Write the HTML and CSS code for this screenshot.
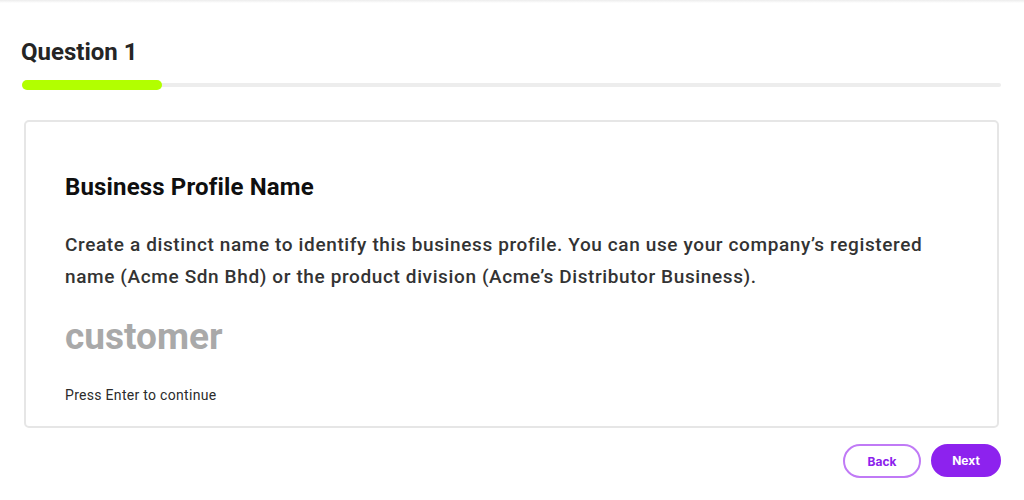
FILE: index.html
```html
<!DOCTYPE html>
<html lang="en">
<head>
<meta charset="utf-8">
<title>Question 1</title>
<link rel="stylesheet" href="styles.css">
</head>
<body>
<div class="topbar"></div>
<main class="page">
  <h1 class="q-title">Question 1</h1>
  <div class="progress"><div class="progress-fill"></div></div>
  <section class="card">
    <h2 class="card-title">Business Profile Name</h2>
    <p class="card-desc">Create a distinct name to identify this business profile. You can use your company’s registered name (Acme Sdn Bhd) or the product division (Acme’s Distributor Business).</p>
    <input class="answer" type="text" value="customer">
    <p class="hint">Press Enter to continue</p>
  </section>
  <div class="actions">
    <button class="btn btn-outline">Back</button>
    <button class="btn btn-primary">Next</button>
  </div>
</main>
</body>
</html>
```

FILE: styles.css
```css
* { box-sizing: border-box; }
html, body { margin: 0; padding: 0; background: #fff; }
body { font-family: Roboto, "Noto Sans", sans-serif; color: #222; }

.topbar {
  height: 3px;
  background: linear-gradient(#ececec, #fff);
}

.page {
  padding: 0 23px 0 22px;
}

.q-title {
  margin: 34px 0 0 -1px;
  font-size: 24px;
  line-height: 30px;
  font-weight: 700;
  color: #252525;
}

.progress {
  margin-top: 16px;
  height: 4px;
  background: #ededed;
  border-radius: 2px;
  position: relative;
}
.progress-fill {
  position: absolute;
  left: 0;
  top: -3px;
  width: 140px;
  height: 10px;
  background: #b2ff00;
  border-radius: 5px;
}

.card {
  margin: 33px 2px 0 2px;
  border: 2px solid #e6e6e6;
  border-radius: 5px;
  padding: 50px 40px 22px 39px;
}

.card-title {
  margin: 0;
  font-size: 24px;
  line-height: 30px;
  font-weight: 700;
  letter-spacing: 0.15px;
  color: #0f0f0f;
}

.card-desc {
  margin: 27px 0 0;
  font-size: 19px;
  line-height: 32px;
  font-weight: 500;
  color: #333;
  letter-spacing: 0.62px;
}

.answer {
  display: block;
  margin: 22px 0 0;
  padding: 0;
  border: none;
  outline: none;
  background: transparent;
  font-family: inherit;
  font-size: 37px;
  line-height: 44px;
  height: 44px;
  font-weight: 700;
  color: #a9a9a9;
  width: 100%;
}

.hint {
  margin: 27px 0 0;
  font-size: 14px;
  line-height: 18px;
  letter-spacing: 0.3px;
  color: #2b2b2b;
}

.actions {
  display: flex;
  justify-content: flex-end;
  gap: 10px;
  margin-top: 16px;
}

.btn {
  height: 33px;
  border-radius: 17px;
  font-family: Inter, "Open Sans", sans-serif;
  font-size: 12px;
  font-weight: 700;
  cursor: pointer;
}
.btn-outline {
  width: 78px;
  height: 34px;
  background: #fff;
  border: 2px solid #c07af6;
  color: #8c22ec;
}
.btn-primary {
  width: 70px;
  background: #8d22ee;
  border: 2px solid #8d22ee;
  color: #fff;
}
```
